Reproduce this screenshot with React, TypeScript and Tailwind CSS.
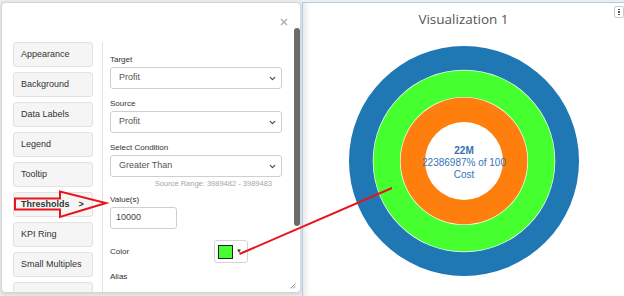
import { ChevronDown } from "lucide-react";

const tabs = [
  "Appearance",
  "Background",
  "Data Labels",
  "Legend",
  "Tooltip",
  "Thresholds",
  "KPI Ring",
  "Small Multiples",
  "",
];

function Select({ value }: { value: string }) {
  return (
    <div className="h-[22px] w-[172px] border border-[#cfcfcf] rounded-[3px] bg-white flex items-center justify-between pl-[8px] pr-[4px] text-[9px] text-[#555]">
      <span>{value}</span>
      <ChevronDown size={9} strokeWidth={3} className="text-[#444]" />
    </div>
  );
}

function Label({ children, className = "" }: { children: React.ReactNode; className?: string }) {
  return <p className={`text-[8px] leading-[10px] text-[#333] ${className}`}>{children}</p>;
}

export default function App() {
  return (
    <div className="relative w-[624px] h-[296px] overflow-hidden bg-[#eeeeee] flex font-['Liberation_Sans',Arial,sans-serif]">
      {/* Settings modal */}
      <div className="shrink-0 pl-[1px] pt-[2px] pb-[3px]">
        <div className="relative w-[300px] h-full bg-white rounded-[4px] border border-[#d6d6d6] shadow-[0_1px_4px_rgba(0,0,0,0.15)] flex flex-col overflow-hidden">
          {/* Header */}
          <div className="h-[39px] shrink-0 flex justify-end items-start pt-[15px] pr-[12px]">
            <svg width="8" height="8" viewBox="0 0 8 8">
              <path d="M1 1 L7 7 M7 1 L1 7" stroke="#b3b3b3" strokeWidth="1.6" />
            </svg>
          </div>

          {/* Body */}
          <div className="flex flex-1 min-h-0">
            <div className="pl-[11px] w-[91px] shrink-0 flex flex-col gap-[5px]">
              {tabs.map((t, i) => (
                <div
                  key={i}
                  className="h-[25px] w-[80px] shrink-0 rounded-[3px] border border-[#e2e2e2] bg-[#f5f5f5] flex items-center pl-[7px] text-[9px] text-[#333]"
                >
                  {t === "Thresholds" ? (
                    <span className="font-bold">
                      Thresholds<span className="ml-[9px]">&gt;</span>
                    </span>
                  ) : (
                    t
                  )}
                </div>
              ))}
            </div>

            <div className="ml-[9px] border-l border-[#e3e3e3] pl-[7px] pt-[13px] flex flex-col">
              <Label className="mb-[2px]">Target</Label>
              <Select value="Profit" />

              <Label className="mt-[10px] mb-[2px]">Source</Label>
              <Select value="Profit" />

              <Label className="mt-[10px] mb-[2px]">Select Condition</Label>
              <Select value="Greater Than" />
              <p className="mt-[2px] w-[172px] pr-[10px] text-right text-[7.5px] leading-[10px] text-[#a6a6a6]">
                Source Range: 3989482 - 3989483
              </p>

              <Label className="mt-[6px] mb-[2px]">Value(s)</Label>
              <div className="h-[22px] w-[67px] border border-[#cfcfcf] rounded-[3px] flex items-center pl-[5px] text-[9px] text-[#444]">
                10000
              </div>

              <div className="mt-[11px] flex items-center">
                <span className="w-[104px] text-[8px] leading-[10px] text-[#333]">Color</span>
                <div className="h-[23px] w-[34px] border border-[#d3d3d3] rounded-[3px] flex items-center pl-[3px] gap-[3px]">
                  <div className="w-[15px] h-[14px] bg-[#46ff2e] border border-[#222]" />
                  <span className="text-[6px] text-[#333]">▼</span>
                </div>
              </div>

              <Label className="mt-[9px]">Alias</Label>
            </div>
          </div>

          {/* Scrollbar thumb */}
          <div className="absolute right-0 top-[25px] w-[6px] h-[198px] rounded-full bg-[#6b6b6b]" />
          {/* Resize grip */}
          <svg className="absolute right-[4px] bottom-[3px]" width="6" height="6" viewBox="0 0 6 6">
            <path d="M0.5 5.5 L5.5 0.5 M3 5.5 L5.5 3" stroke="#777" strokeWidth="0.8" />
          </svg>
        </div>
      </div>

      {/* Visualization panel */}
      <div className="relative flex-1 mt-[2px] ml-[1px] bg-white border-t border-l border-[#aecbea] shadow-[inset_6px_0_6px_-4px_rgba(0,0,0,0.12)] flex flex-col items-center">
        <p className="pt-[6px] leading-[20px] text-[13.5px] text-[#555] font-['Open_Sans','Liberation_Sans',sans-serif]">
          Visualization 1
        </p>
        <svg className="mt-[12px]" width="240" height="240" viewBox="0 0 240 240">
          <circle cx="120" cy="120" r="115" fill="#1f77b4" />
          <circle cx="120" cy="120" r="91.3" fill="#ffffff" />
          <circle cx="120" cy="120" r="90.6" fill="#46ff2e" />
          <circle cx="120" cy="120" r="64.1" fill="#ffffff" />
          <circle cx="120" cy="120" r="63.4" fill="#ff7f0e" />
          <circle cx="120" cy="120" r="39" fill="#ffffff" />
          <g fontFamily="Liberation Sans, Arial, sans-serif" fontSize="10" fill="#3473b3" textAnchor="middle">
            <text x="120" y="112.6" fontWeight="bold">22M</text>
            <text x="120" y="124.6">22386987% of 100</text>
            <text x="120" y="136.6">Cost</text>
          </g>
        </svg>
        <div className="absolute right-0 top-[3px] w-[10px] h-[12px] border border-[#cccccc] rounded-[2px] bg-white flex flex-col items-center justify-center gap-[1px]">
          <span className="w-[1.5px] h-[1.5px] bg-[#555]" />
          <span className="w-[1.5px] h-[1.5px] bg-[#555]" />
          <span className="w-[1.5px] h-[1.5px] bg-[#555]" />
        </div>
      </div>

      {/* Annotations */}
      <svg className="absolute inset-0 pointer-events-none" width="624" height="296" viewBox="0 0 624 296">
        <polygon
          points="15,198.5 60,198.5 60,191.5 106,203 60,217 60,209.5 15,209.5"
          fill="none"
          stroke="#e8141c"
          strokeWidth="2"
          strokeLinejoin="miter"
        />
        <line x1="239.5" y1="254" x2="392" y2="188" stroke="#e8141c" strokeWidth="2" />
      </svg>
    </div>
  );
}
